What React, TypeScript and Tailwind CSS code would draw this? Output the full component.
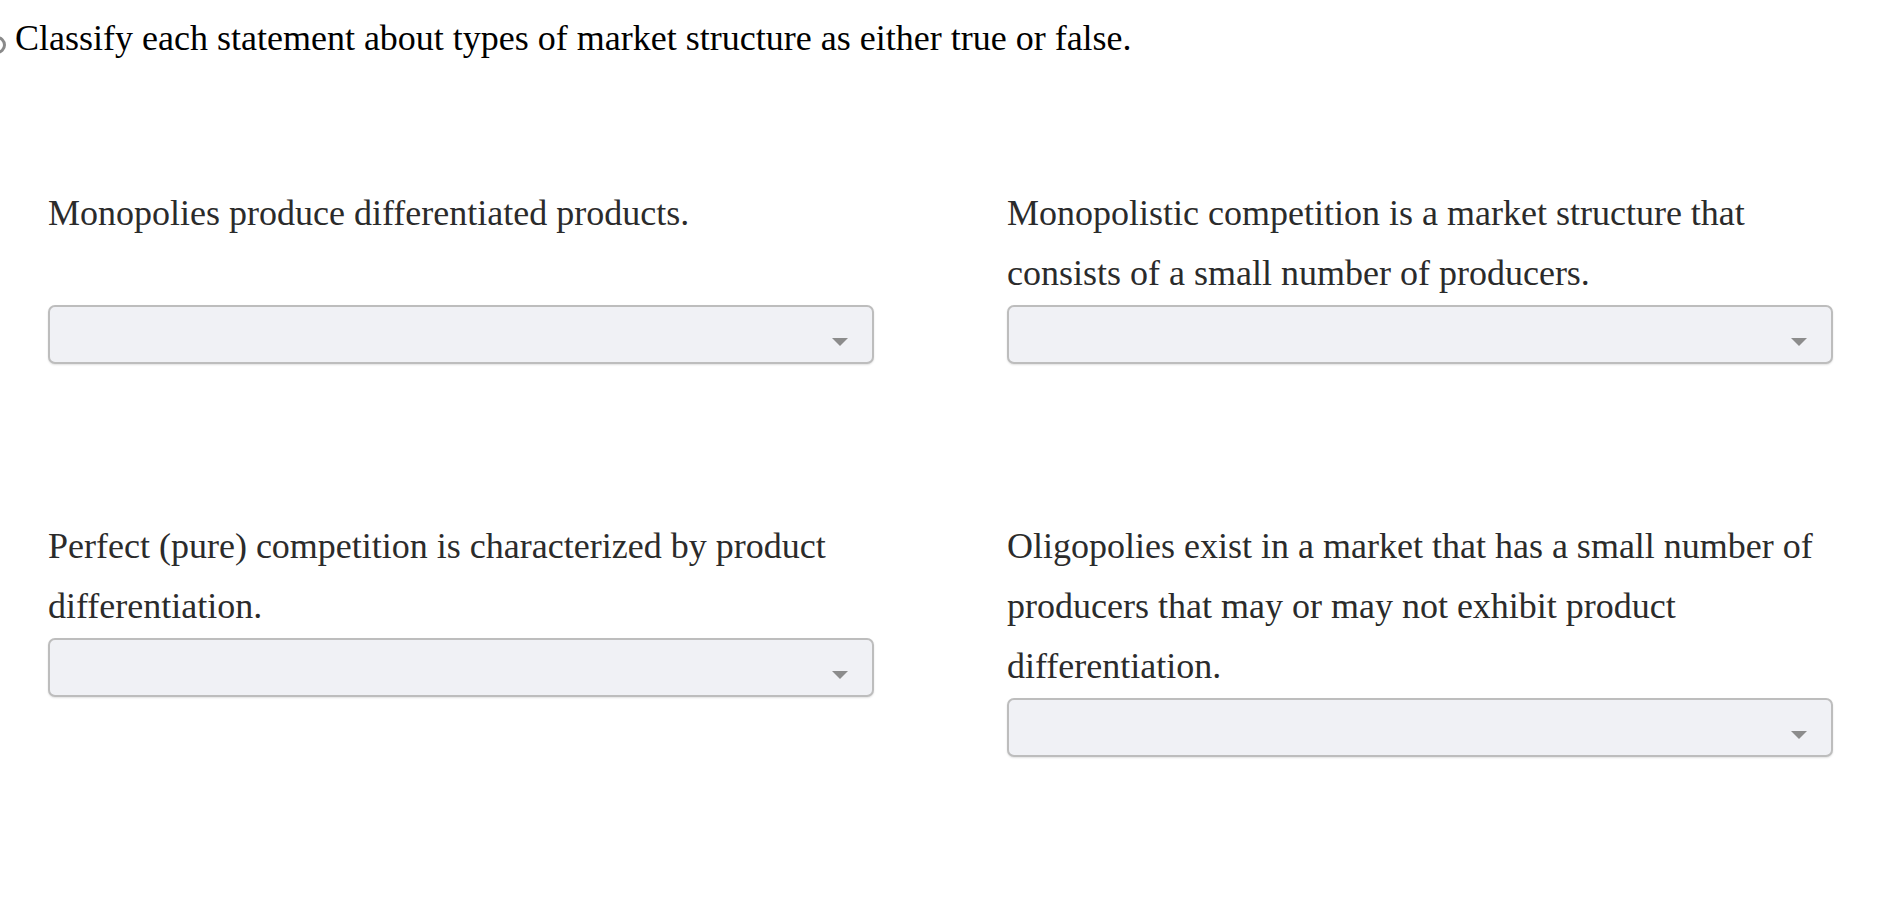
import React from "react";

const items = [
  "Monopolies produce differentiated products.",
  "Monopolistic competition is a market structure that consists of a small number of producers.",
  "Perfect (pure) competition is characterized by product differentiation.",
  "Oligopolies exist in a market that has a small number of producers that may or may not exhibit product differentiation.",
];

function Dropdown() {
  return (
    <div className="mt-[2px] h-[59px] w-full rounded-[7px] border-2 border-[#bdbdbd] bg-[#f0f1f5] shadow-[0_1px_2px_rgba(0,0,0,0.12)] flex items-center justify-end pr-[24px] pt-[14px] cursor-pointer">
      <svg width="16" height="8" viewBox="0 0 16 8">
        <path d="M0 0 H16 L8 8 Z" fill="#8c8c8c" />
      </svg>
    </div>
  );
}

function Item({ text, minLines }: { text: string; minLines?: boolean }) {
  return (
    <div className="flex flex-col">
      <p className={"text-[36px] leading-[60px] text-[#2b2b2b] " + (minLines ? "min-h-[120px]" : "")}>
        {text}
      </p>
      <Dropdown />
    </div>
  );
}

export default function App() {
  return (
    <div className="min-h-[910px] w-[1880px] bg-white font-['Liberation_Serif',serif] overflow-hidden">
      <div className="relative flex items-center pt-[8px]">
        <span className="absolute left-[-12px] top-[36px] h-[18px] w-[18px] rounded-full border-[3px] border-[#8a8a8a]" />
        <h1 className="pl-[15px] text-[36px] leading-[60px] text-black">
          Classify each statement about types of market structure as either true or false.
        </h1>
      </div>

      <div className="mt-[115px] pl-[48px] grid grid-cols-[826px_826px] gap-x-[133px] gap-y-[152px] items-start">
        <Item text={items[0]} minLines />
        <Item text={items[1]} minLines />
        <Item text={items[2]} />
        <Item text={items[3]} />
      </div>
    </div>
  );
}
